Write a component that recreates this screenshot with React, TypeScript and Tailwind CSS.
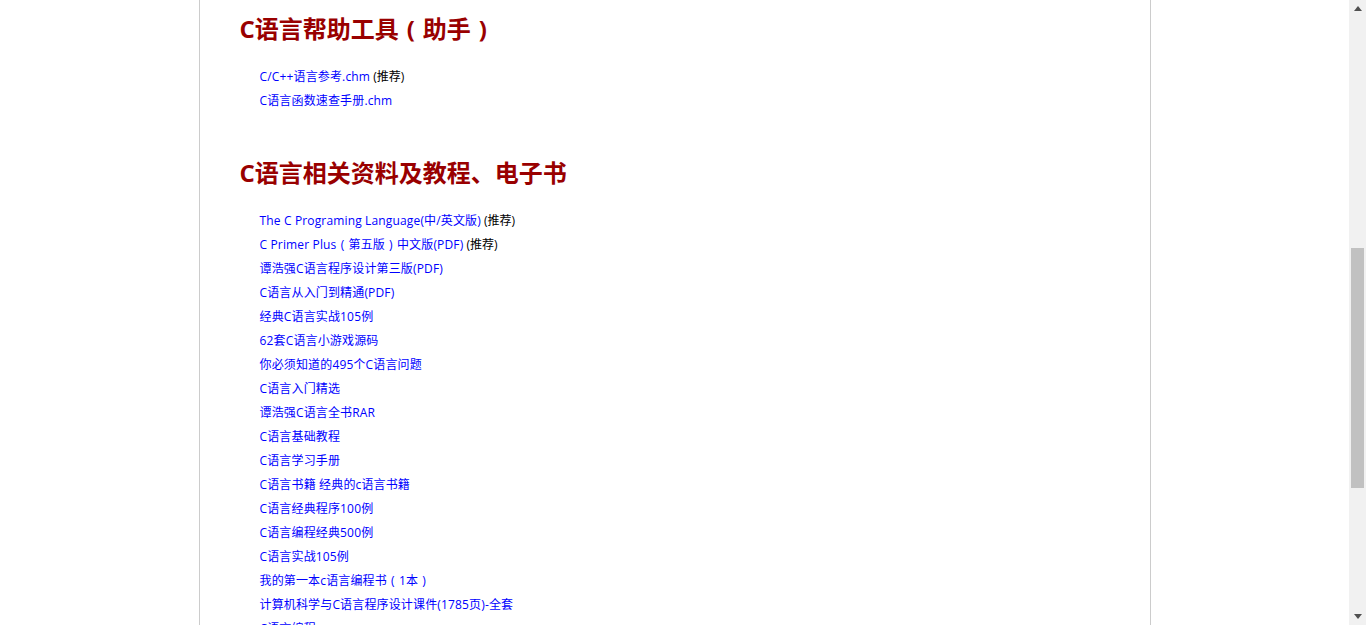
const tools = [
  { title: "C/C++语言参考.chm", hot: true },
  { title: "C语言函数速查手册.chm", hot: false },
];

const books = [
  { title: "The C Programing Language(中/英文版)", hot: true },
  { title: "C Primer Plus（第五版）中文版(PDF)", hot: true },
  { title: "谭浩强C语言程序设计第三版(PDF)", hot: false },
  { title: "C语言从入门到精通(PDF)", hot: false },
  { title: "经典C语言实战105例", hot: false },
  { title: "62套C语言小游戏源码", hot: false },
  { title: "你必须知道的495个C语言问题", hot: false },
  { title: "C语言入门精选", hot: false },
  { title: "谭浩强C语言全书RAR", hot: false },
  { title: "C语言基础教程", hot: false },
  { title: "C语言学习手册", hot: false },
  { title: "C语言书籍 经典的c语言书籍", hot: false },
  { title: "C语言经典程序100例", hot: false },
  { title: "C语言编程经典500例", hot: false },
  { title: "C语言实战105例", hot: false },
  { title: "我的第一本c语言编程书（1本）", hot: false },
  { title: "计算机科学与C语言程序设计课件(1785页)-全套", hot: false },
  { title: "C语言编程", hot: false },
];

// full-width parens drawn centred in their cell, as the YaHei glyphs are
function Wide({ text }: { text: string }) {
  const parts = text.split(/([（）])/);
  return (
    <>
      {parts.map((p, i) =>
        p === "（" ? (
          <span key={i} className="inline-block w-[1em] text-center">(</span>
        ) : p === "）" ? (
          <span key={i} className="inline-block w-[1em] text-center">)</span>
        ) : (
          p
        )
      )}
    </>
  );
}

function LinkList({ items }: { items: { title: string; hot: boolean }[] }) {
  return (
    <ul className="mt-[20px] pl-5">
      {items.map((it) => (
        <li key={it.title} className="h-6 leading-6 text-[12px] text-black">
          <a href="#" className="text-[#0000ff] tracking-[0.15px]"><Wide text={it.title} /></a>
          {it.hot && <span> (推荐)</span>}
        </li>
      ))}
    </ul>
  );
}

function Scrollbar() {
  return (
    <div className="w-[17px] h-full bg-[#f1f1f1] flex flex-col shrink-0">
      <div className="h-[17px] flex items-center justify-center">
        <svg width="8" height="5" viewBox="0 0 8 5"><path d="M4 0 L8 5 L0 5 Z" fill="#505050" /></svg>
      </div>
      <div className="flex-1 px-[2px]">
        <div className="mt-[231px] h-[240px] bg-[#c1c1c1]" />
      </div>
      <div className="h-[17px] flex items-center justify-center">
        <svg width="8" height="5" viewBox="0 0 8 5"><path d="M0 0 L8 0 L4 5 Z" fill="#505050" /></svg>
      </div>
    </div>
  );
}

export default function App() {
  return (
    <div className="h-[625px] w-[1366px] flex overflow-hidden bg-white font-['Segoe_UI','Open_Sans','Noto_Sans_CJK_SC',sans-serif]">
      <div className="flex-1 overflow-hidden">
        <div className="w-[952px] mx-auto h-[700px] border-x border-[#cccccc] pl-10 pt-[13px]">
          <h2 className="text-[24px] leading-8 font-bold text-[#990000]"><Wide text="C语言帮助工具（助手）" /></h2>
          <LinkList items={tools} />
          <h2 className="mt-[44px] text-[24px] leading-8 font-bold text-[#990000]">C语言相关资料及教程、电子书</h2>
          <LinkList items={books} />
        </div>
      </div>
      <Scrollbar />
    </div>
  );
}
